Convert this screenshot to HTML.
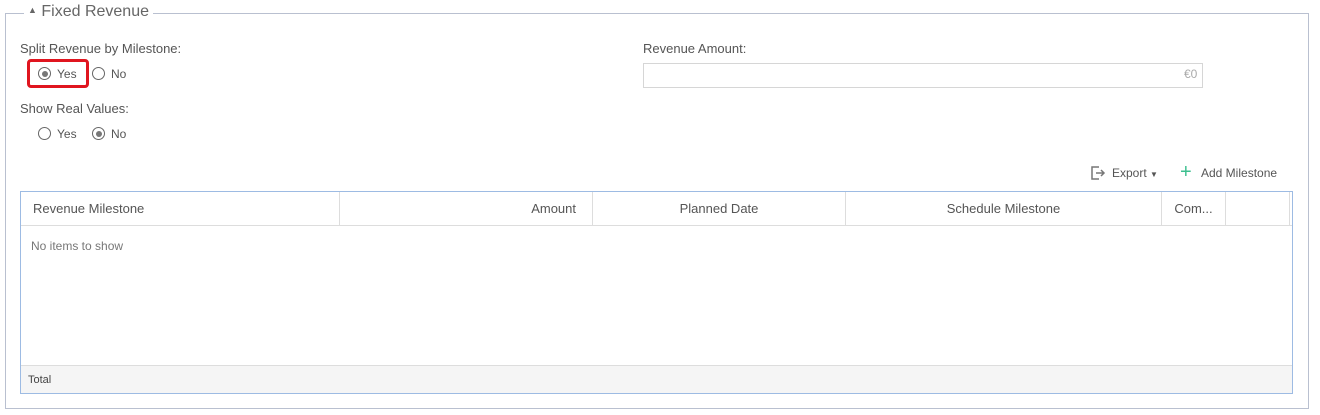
<!DOCTYPE html>
<html><head><style>
body{margin:0;width:1320px;height:415px;background:#fff;font-family:"Liberation Sans",sans-serif;color:#444;position:relative;overflow:hidden}
.a{position:absolute}
.fs{left:5px;top:13px;width:1304px;height:396px;border:1px solid #b9c0d0;box-sizing:border-box}
.leg{left:24px;top:3px;background:#fff;padding:0 4px;font-size:16px;color:#666}
.lbl{font-size:13px;color:#555}
.r{width:13px;height:13px;border:1px solid #666;border-radius:50%;box-sizing:border-box}
.r.on::after{content:"";position:absolute;left:2.5px;top:2.5px;width:6px;height:6px;border-radius:50%;background:#777}
.t{font-size:12px;color:#555}
.grid{left:20px;top:191px;width:1273px;height:203px;border:1px solid #9dbbe3;box-sizing:border-box}
.h{top:0;height:34px;border-bottom:1px solid #ddd;border-right:1px solid #ddd;box-sizing:border-box;font-size:13px;line-height:34px;color:#555}
</style></head><body>
<div class="a fs"></div>
<div class="a leg"><span style="font-size:9px;vertical-align:3px">&#9650;</span> Fixed Revenue</div>
<div class="a lbl" style="left:20px;top:41px">Split Revenue by Milestone:</div>
<div class="a" style="left:27px;top:59px;width:62px;height:29px;border:3px solid #e0151f;border-radius:4px;box-sizing:border-box"></div>
<div class="a r on" style="left:38px;top:67px"></div><div class="a t" style="left:57px;top:67px">Yes</div>
<div class="a r" style="left:92px;top:67px"></div><div class="a t" style="left:111px;top:67px">No</div>
<div class="a lbl" style="left:20px;top:101px">Show Real Values:</div>
<div class="a r" style="left:38px;top:127px"></div><div class="a t" style="left:57px;top:127px">Yes</div>
<div class="a r on" style="left:92px;top:127px"></div><div class="a t" style="left:111px;top:127px">No</div>
<div class="a lbl" style="left:643px;top:41px">Revenue Amount:</div>
<div class="a" style="left:643px;top:63px;width:560px;height:25px;border:1px solid #d6d6d6;box-sizing:border-box"></div>
<div class="a t" style="left:1184px;top:67px;color:#aaa">€0</div>
<svg class="a" style="left:1090px;top:165px" width="16" height="16" viewBox="0 0 16 16" fill="none" stroke="#777" stroke-width="1.5"><path d="M9 2H2v12h7M6 8h8M11 5l3 3-3 3"/></svg>
<div class="a t" style="left:1112px;top:166px">Export <span style="font-size:8px">&#9660;</span></div>
<div class="a" style="left:1180px;top:164px;color:#3cbf8f;font-size:20px;line-height:16px">+</div>
<div class="a t" style="left:1201px;top:166px">Add Milestone</div>
<div class="a grid">
<div class="a h" style="left:0;width:319px;padding-left:12px">Revenue Milestone</div>
<div class="a h" style="left:319px;width:253px;text-align:right;padding-right:16px">Amount</div>
<div class="a h" style="left:572px;width:253px;text-align:center">Planned Date</div>
<div class="a h" style="left:825px;width:316px;text-align:center">Schedule Milestone</div>
<div class="a h" style="left:1141px;width:64px;text-align:center">Com...</div>
<div class="a h" style="left:1205px;width:64px"></div>
<div class="a h" style="left:1269px;width:2px;border-right:0"></div>
<div class="a t" style="left:10px;top:47px;color:#777">No items to show</div>
<div class="a" style="left:0;top:173px;width:1271px;height:28px;background:#f5f5f5;border-top:1px solid #ddd;box-sizing:border-box;font-size:11px;line-height:28px;padding-left:7px;color:#444">Total</div>
</div>
</body></html>
